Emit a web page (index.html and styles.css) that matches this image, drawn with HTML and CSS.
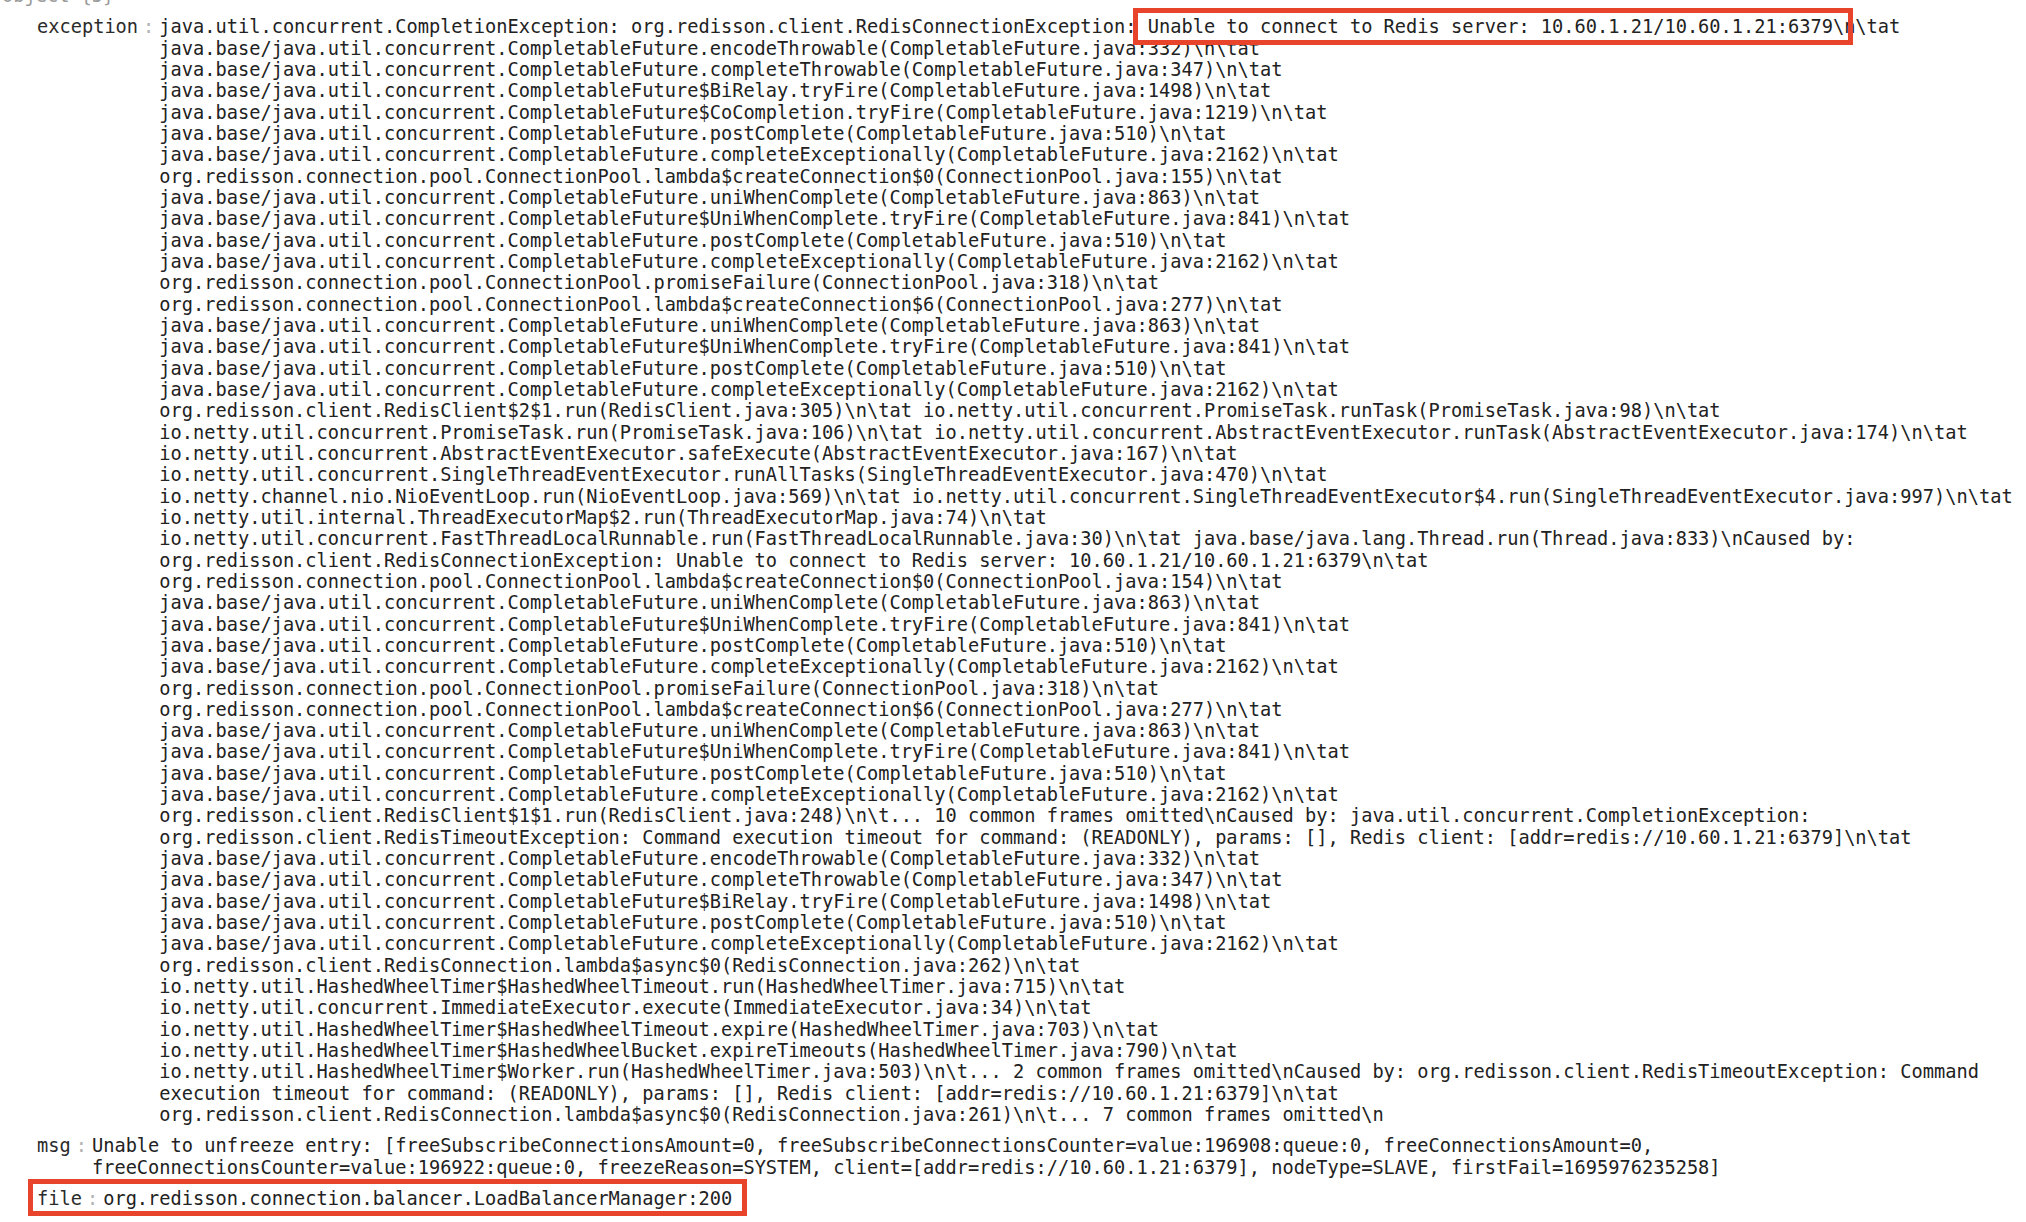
FILE: index.html
```html
<!DOCTYPE html>
<html lang="en">
<head>
    <meta charset="UTF-8">
    <meta name="viewport" content="width=device-width, initial-scale=1.0">
    <title>Log entry</title>
    <link rel="stylesheet" href="styles.css">
</head>
<body>

    <div class="page">
        <div class="tree">
            <div class="head">object {5}</div>

            <!-- exception -->
            <div class="entry">
                <span class="key">exception</span><span class="sep">:</span>
                <div class="val">java.util.concurrent.CompletionException: org.redisson.client.RedisConnectionException: Unable to connect to Redis server: 10.60.1.21/10.60.1.21:6379\n\tat
java.base/java.util.concurrent.CompletableFuture.encodeThrowable(CompletableFuture.java:332)\n\tat
java.base/java.util.concurrent.CompletableFuture.completeThrowable(CompletableFuture.java:347)\n\tat
java.base/java.util.concurrent.CompletableFuture$BiRelay.tryFire(CompletableFuture.java:1498)\n\tat
java.base/java.util.concurrent.CompletableFuture$CoCompletion.tryFire(CompletableFuture.java:1219)\n\tat
java.base/java.util.concurrent.CompletableFuture.postComplete(CompletableFuture.java:510)\n\tat
java.base/java.util.concurrent.CompletableFuture.completeExceptionally(CompletableFuture.java:2162)\n\tat
org.redisson.connection.pool.ConnectionPool.lambda$createConnection$0(ConnectionPool.java:155)\n\tat
java.base/java.util.concurrent.CompletableFuture.uniWhenComplete(CompletableFuture.java:863)\n\tat
java.base/java.util.concurrent.CompletableFuture$UniWhenComplete.tryFire(CompletableFuture.java:841)\n\tat
java.base/java.util.concurrent.CompletableFuture.postComplete(CompletableFuture.java:510)\n\tat
java.base/java.util.concurrent.CompletableFuture.completeExceptionally(CompletableFuture.java:2162)\n\tat
org.redisson.connection.pool.ConnectionPool.promiseFailure(ConnectionPool.java:318)\n\tat
org.redisson.connection.pool.ConnectionPool.lambda$createConnection$6(ConnectionPool.java:277)\n\tat
java.base/java.util.concurrent.CompletableFuture.uniWhenComplete(CompletableFuture.java:863)\n\tat
java.base/java.util.concurrent.CompletableFuture$UniWhenComplete.tryFire(CompletableFuture.java:841)\n\tat
java.base/java.util.concurrent.CompletableFuture.postComplete(CompletableFuture.java:510)\n\tat
java.base/java.util.concurrent.CompletableFuture.completeExceptionally(CompletableFuture.java:2162)\n\tat
org.redisson.client.RedisClient$2$1.run(RedisClient.java:305)\n\tat io.netty.util.concurrent.PromiseTask.runTask(PromiseTask.java:98)\n\tat
io.netty.util.concurrent.PromiseTask.run(PromiseTask.java:106)\n\tat io.netty.util.concurrent.AbstractEventExecutor.runTask(AbstractEventExecutor.java:174)\n\tat
io.netty.util.concurrent.AbstractEventExecutor.safeExecute(AbstractEventExecutor.java:167)\n\tat
io.netty.util.concurrent.SingleThreadEventExecutor.runAllTasks(SingleThreadEventExecutor.java:470)\n\tat
io.netty.channel.nio.NioEventLoop.run(NioEventLoop.java:569)\n\tat io.netty.util.concurrent.SingleThreadEventExecutor$4.run(SingleThreadEventExecutor.java:997)\n\tat
io.netty.util.internal.ThreadExecutorMap$2.run(ThreadExecutorMap.java:74)\n\tat
io.netty.util.concurrent.FastThreadLocalRunnable.run(FastThreadLocalRunnable.java:30)\n\tat java.base/java.lang.Thread.run(Thread.java:833)\nCaused by:
org.redisson.client.RedisConnectionException: Unable to connect to Redis server: 10.60.1.21/10.60.1.21:6379\n\tat
org.redisson.connection.pool.ConnectionPool.lambda$createConnection$0(ConnectionPool.java:154)\n\tat
java.base/java.util.concurrent.CompletableFuture.uniWhenComplete(CompletableFuture.java:863)\n\tat
java.base/java.util.concurrent.CompletableFuture$UniWhenComplete.tryFire(CompletableFuture.java:841)\n\tat
java.base/java.util.concurrent.CompletableFuture.postComplete(CompletableFuture.java:510)\n\tat
java.base/java.util.concurrent.CompletableFuture.completeExceptionally(CompletableFuture.java:2162)\n\tat
org.redisson.connection.pool.ConnectionPool.promiseFailure(ConnectionPool.java:318)\n\tat
org.redisson.connection.pool.ConnectionPool.lambda$createConnection$6(ConnectionPool.java:277)\n\tat
java.base/java.util.concurrent.CompletableFuture.uniWhenComplete(CompletableFuture.java:863)\n\tat
java.base/java.util.concurrent.CompletableFuture$UniWhenComplete.tryFire(CompletableFuture.java:841)\n\tat
java.base/java.util.concurrent.CompletableFuture.postComplete(CompletableFuture.java:510)\n\tat
java.base/java.util.concurrent.CompletableFuture.completeExceptionally(CompletableFuture.java:2162)\n\tat
org.redisson.client.RedisClient$1$1.run(RedisClient.java:248)\n\t... 10 common frames omitted\nCaused by: java.util.concurrent.CompletionException:
org.redisson.client.RedisTimeoutException: Command execution timeout for command: (READONLY), params: [], Redis client: [addr=redis://10.60.1.21:6379]\n\tat
java.base/java.util.concurrent.CompletableFuture.encodeThrowable(CompletableFuture.java:332)\n\tat
java.base/java.util.concurrent.CompletableFuture.completeThrowable(CompletableFuture.java:347)\n\tat
java.base/java.util.concurrent.CompletableFuture$BiRelay.tryFire(CompletableFuture.java:1498)\n\tat
java.base/java.util.concurrent.CompletableFuture.postComplete(CompletableFuture.java:510)\n\tat
java.base/java.util.concurrent.CompletableFuture.completeExceptionally(CompletableFuture.java:2162)\n\tat
org.redisson.client.RedisConnection.lambda$async$0(RedisConnection.java:262)\n\tat
io.netty.util.HashedWheelTimer$HashedWheelTimeout.run(HashedWheelTimer.java:715)\n\tat
io.netty.util.concurrent.ImmediateExecutor.execute(ImmediateExecutor.java:34)\n\tat
io.netty.util.HashedWheelTimer$HashedWheelTimeout.expire(HashedWheelTimer.java:703)\n\tat
io.netty.util.HashedWheelTimer$HashedWheelBucket.expireTimeouts(HashedWheelTimer.java:790)\n\tat
io.netty.util.HashedWheelTimer$Worker.run(HashedWheelTimer.java:503)\n\t... 2 common frames omitted\nCaused by: org.redisson.client.RedisTimeoutException: Command
execution timeout for command: (READONLY), params: [], Redis client: [addr=redis://10.60.1.21:6379]\n\tat
org.redisson.client.RedisConnection.lambda$async$0(RedisConnection.java:261)\n\t... 7 common frames omitted\n</div>
            </div>

            <!-- msg -->
            <div class="entry">
                <span class="key">msg</span><span class="sep">:</span>
                <div class="val">Unable to unfreeze entry: [freeSubscribeConnectionsAmount=0, freeSubscribeConnectionsCounter=value:196908:queue:0, freeConnectionsAmount=0,
freeConnectionsCounter=value:196922:queue:0, freezeReason=SYSTEM, client=[addr=redis://10.60.1.21:6379], nodeType=SLAVE, firstFail=1695976235258]</div>
            </div>

            <!-- file -->
            <div class="entry">
                <span class="key">file</span><span class="sep">:</span>
                <div class="val">org.redisson.connection.balancer.LoadBalancerManager:200</div>
            </div>
        </div>

        <!-- highlight marks -->
        <div class="mark mark-server"></div>
        <div class="mark mark-file"></div>
    </div>

</body>
</html>
```

FILE: styles.css
```css
body {
    margin: 0;
    padding: 0;
    background-color: #fff;
    font-family: "DejaVu Sans Mono", "Liberation Mono", monospace;
    font-size: 18.67px;
    line-height: 21.33px;
    color: #222;
}
.page {
    position: relative;
    height: 1222px;
    overflow: hidden;
}
.tree {
    margin-top: -15px;
}
.head {
    color: #9a9a9a;
    padding-left: 2px;
}
.entry {
    display: flex;
    align-items: flex-start;
    margin-top: 10px;
    padding-left: 37px;
}
.key {
    color: #2b2b2b;
    white-space: pre;
}
.sep {
    color: #b4b4b4;
    margin: 0 5px;
}
.val {
    white-space: pre;
}
.mark {
    position: absolute;
    box-sizing: border-box;
    border: 5px solid #e8432b;
}
.mark-server {
    left: 1133px;
    top: 8px;
    width: 720px;
    height: 37px;
}
.mark-file {
    left: 28px;
    top: 1179px;
    width: 719px;
    height: 37px;
}
```
